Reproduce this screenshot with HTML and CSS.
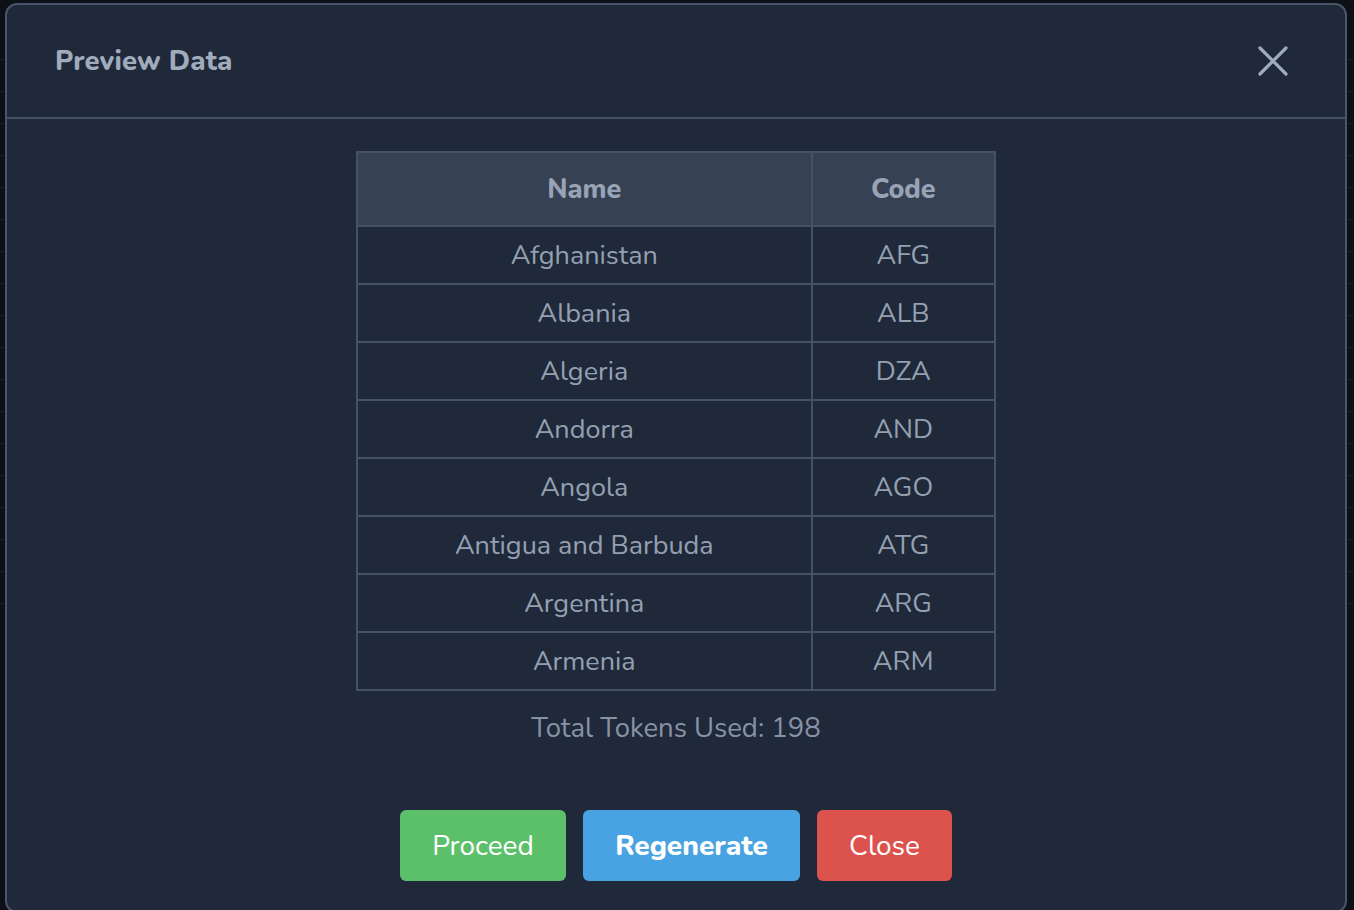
FILE: index.html
```html
<!DOCTYPE html>
<html lang="en">
<head>
<meta charset="utf-8">
<title>Preview Data</title>
<link rel="stylesheet" href="styles.css">
</head>
<body>
<div class="page">
  <div class="bg-row"></div><div class="bg-row"></div><div class="bg-row"></div>
  <div class="bg-row"></div><div class="bg-row"></div><div class="bg-row"></div>
  <div class="bg-row"></div><div class="bg-row"></div><div class="bg-row"></div>
  <div class="bg-row"></div><div class="bg-row"></div><div class="bg-row"></div>
  <div class="bg-row"></div><div class="bg-row"></div><div class="bg-row"></div>
  <div class="bg-row"></div><div class="bg-row"></div><div class="bg-row"></div>
</div>
<div class="modal">
  <div class="modal-header">
    <h2 class="modal-title">Preview Data</h2>
    <button class="close-x" aria-label="Close">
      <svg width="32" height="32" viewBox="0 0 32 32"><path d="M3 3 L29 29 M29 3 L3 29" stroke="#a0abbd" stroke-width="3.2" stroke-linecap="round" fill="none"/></svg>
    </button>
  </div>
  <div class="modal-body">
    <table class="data">
      <thead>
        <tr><th class="c-name">Name</th><th class="c-code">Code</th></tr>
      </thead>
      <tbody>
        <tr><td>Afghanistan</td><td>AFG</td></tr>
        <tr><td>Albania</td><td>ALB</td></tr>
        <tr><td>Algeria</td><td>DZA</td></tr>
        <tr><td>Andorra</td><td>AND</td></tr>
        <tr><td>Angola</td><td>AGO</td></tr>
        <tr><td>Antigua and Barbuda</td><td>ATG</td></tr>
        <tr><td>Argentina</td><td>ARG</td></tr>
        <tr><td>Armenia</td><td>ARM</td></tr>
      </tbody>
    </table>
    <p class="tokens">Total Tokens Used: 198</p>
    <div class="actions">
      <button class="btn btn-green">Proceed</button>
      <button class="btn btn-blue">Regenerate</button>
      <button class="btn btn-red">Close</button>
    </div>
  </div>
</div>
</body>
</html>
```
FILE: styles.css
```css
* { box-sizing: border-box; }
html, body {
  margin: 0;
  padding: 0;
  width: 1354px;
  height: 910px;
  overflow: hidden;
  background: #0d1117;
  font-family: "Nunito", Lato, "Noto Sans", sans-serif;
}
.page {
  display: flex;
  flex-direction: column;
  padding-top: 28px;
}
.bg-row {
  height: 32px;
  border-bottom: 1px solid #181e27;
}
.modal {
  position: fixed;
  left: 5px;
  top: 3px;
  width: 1342px;
  background: #202939;
  border: 2px solid #4a5568;
  border-radius: 12px;
}
.modal-header {
  height: 114px;
  display: flex;
  align-items: center;
  justify-content: space-between;
  padding: 0 56px 0 48px;
  border-bottom: 2px solid #465264;
}
.modal-title {
  margin: 0;
  font-size: 27.5px;
  font-weight: 800;
  color: #a0abbd;
  letter-spacing: 0.2px;
}
.close-x {
  background: none;
  border: 0;
  padding: 0;
  width: 32px;
  height: 32px;
  display: flex;
}
.modal-body {
  display: flex;
  flex-direction: column;
  align-items: center;
  padding: 32px 0 30px;
}
.data {
  border-collapse: collapse;
  width: 640px;
  color: #94a0b2;
  font-size: 27px;
}
.data th, .data td {
  border: 2px solid #465264;
  text-align: center;
  font-weight: 400;
}
.data th {
  background: #364154;
  height: 74px;
  font-weight: 800;
  color: #98a4b6;
}
.data td { height: 58px; }
.c-name { width: 456px; }
.c-code { width: 184px; }
.tokens {
  margin: 19px 0 0;
  font-size: 27.5px;
  line-height: 36px;
  color: #8793a5;
}
.actions {
  display: flex;
  gap: 17px;
  margin-top: 64px;
}
.btn {
  height: 71px;
  border: 0;
  border-radius: 6px;
  font-family: inherit;
  font-size: 28px;
  color: #ffffff;
  padding: 0 20px;
}
.btn-green { background: #5cbf6a; width: 166px; }
.btn-blue { background: #49a3e2; width: 217px; font-weight: 800; }
.btn-red { background: #dc524d; width: 135px; }
```
